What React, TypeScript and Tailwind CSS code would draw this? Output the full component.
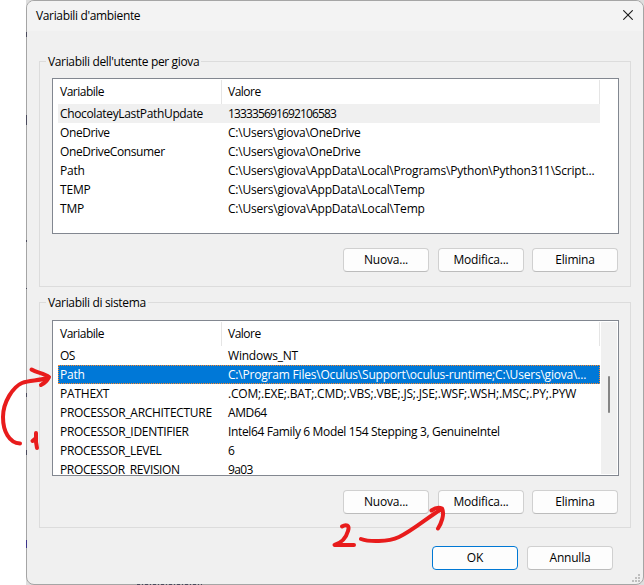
import type { ReactNode } from "react"
import clsx from "clsx"

type Variable = { name: string; value: string; nameClass?: string; valueClass?: string }

const userVariables: Variable[] = [
  {
    name: "ChocolateyLastPathUpdate",
    value: "133335691692106583",
    nameClass: "tracking-[-0.35px]",
    valueClass: "tracking-[-0.86px]",
  },
  { name: "OneDrive", value: "C:\\Users\\giova\\OneDrive", nameClass: "tracking-[-0.4px]", valueClass: "tracking-[-0.24px]" },
  { name: "OneDriveConsumer", value: "C:\\Users\\giova\\OneDrive", nameClass: "tracking-[-0.38px]", valueClass: "tracking-[-0.24px]" },
  {
    name: "Path",
    value: "C:\\Users\\giova\\AppData\\Local\\Programs\\Python\\Python311\\Script...",
    valueClass: "tracking-[-0.21px]",
  },
  { name: "TEMP", value: "C:\\Users\\giova\\AppData\\Local\\Temp" },
  { name: "TMP", value: "C:\\Users\\giova\\AppData\\Local\\Temp" },
]

const systemVariables: Variable[] = [
  { name: "OS", value: "Windows_NT", nameClass: "tracking-[-0.5px]" },
  { name: "Path", value: "C:\\Program Files\\Oculus\\Support\\oculus-runtime;C:\\Users\\giova\\..." },
  {
    name: "PATHEXT",
    value: ".COM;.EXE;.BAT;.CMD;.VBS;.VBE;.JS;.JSE;.WSF;.WSH;.MSC;.PY;.PYW",
    valueClass: "tracking-[-0.18px]",
  },
  { name: "PROCESSOR_ARCHITECTURE", value: "AMD64", nameClass: "tracking-[-0.3px]", valueClass: "tracking-[-0.4px]" },
  {
    name: "PROCESSOR_IDENTIFIER",
    value: "Intel64 Family 6 Model 154 Stepping 3, GenuineIntel",
    nameClass: "tracking-[-0.3px]",
    valueClass: "tracking-[-0.36px]",
  },
  { name: "PROCESSOR_LEVEL", value: "6", nameClass: "tracking-[-0.33px]" },
  { name: "PROCESSOR_REVISION", value: "9a03", nameClass: "tracking-[-0.36px]", valueClass: "tracking-[-0.6px]" },
]

function Button({ label, primary }: { label: string; primary?: boolean }) {
  return (
    <button
      className={clsx(
        "h-6 w-[86px] shrink-0 rounded-[4px] border bg-[#fdfdfd] text-center leading-[22px]",
        primary ? "border-[#0078d4]" : "border-[#d0d0d0] border-b-[#bcbcbc]"
      )}
    >
      {label}
    </button>
  )
}

function VariableList({
  variables,
  selected,
  active,
  scrollbar,
}: {
  variables: Variable[]
  selected: number
  active?: boolean
  scrollbar?: boolean
}) {
  return (
    <div className="flex h-[156px] w-[567px] overflow-hidden border border-[#828790] bg-white pt-px pl-[5px]">
      <div className="w-[542px] shrink-0">
        <div className="flex h-6 leading-6 tracking-[-0.5px]">
          <div className="w-[164px] border-r border-[#e5e5e5] pl-0.5">Variabile</div>
          <div className="flex-1 border-r border-[#e5e5e5] pl-1.5">Valore</div>
        </div>
        {variables.map((variable, i) => (
          <div
            key={i}
            className={clsx(
              "flex h-[19px] leading-[19px] whitespace-nowrap",
              i === selected && !active && "bg-[#f0f0f0]",
              i === selected && active && "bg-[#0078d7] text-white outline-1 -outline-offset-1 outline-dotted outline-[#ff8728]"
            )}
          >
            <div className="w-[170px] pl-0.5">
              <span className={variable.nameClass}>{variable.name}</span>
            </div>
            <div>
              <span className={variable.valueClass}>{variable.value}</span>
            </div>
          </div>
        ))}
      </div>
      {scrollbar && (
        <div className="ml-px h-[152px] w-4 bg-[#f0f0f0] pt-[54px] pl-[7px]">
          <div className="h-[37px] w-0.5 rounded-full bg-[#858585]" />
        </div>
      )}
    </div>
  )
}

function Group({ title, children }: { title: string; children: ReactNode }) {
  return (
    <section className="ml-3 h-[226px] w-[592px] border border-[#dcdcdc] pl-3">
      <div className="-mt-2 -ml-1.5 h-4 w-fit bg-[#f0f0f0] px-0.5 leading-4 tracking-[-0.35px]">{title}</div>
      {children}
      <div className="mt-3.5 flex pl-[291px]">
        <Button label="Nuova..." />
        <div className="ml-[9px] flex gap-2">
          <Button label="Modifica..." />
          <Button label="Elimina" />
        </div>
      </div>
    </section>
  )
}

export default function App() {
  return (
    <div className="relative h-[585px] w-[644px] overflow-hidden bg-white pl-[26px] font-['Open_Sans',sans-serif] text-[12px] tracking-[-0.2px] text-black">
      <div className="h-[585px] w-[618px] bg-[#dedede]">
        <div className="h-[585px] w-[618px] overflow-hidden rounded-[8px] border border-[#a5a5a5] bg-[#f0f0f0]">
          <header className="flex h-[30px] justify-between bg-[#f3f3f3] pr-[10px] pl-[9px]">
            <h1 className="leading-[30px] tracking-[-0.35px]">Variabili d'ambiente</h1>
            <svg className="mt-[9px]" width="10" height="10" viewBox="0 0 10 10" stroke="#1a1a1a" strokeWidth="1.1">
              <path d="M.3 .3 9.7 9.7M9.7 .3 .3 9.7" />
            </svg>
          </header>
          <main className="flex flex-col gap-[15px] pt-[30px]">
            <Group title="Variabili dell'utente per giova">
              <div className="mt-2">
                <VariableList variables={userVariables} selected={0} />
              </div>
            </Group>
            <Group title="Variabili di sistema">
              <div className="mt-[9px]">
                <VariableList variables={systemVariables} selected={1} active scrollbar />
              </div>
            </Group>
          </main>
          <footer className="mt-[18px] flex pl-[405px]">
            <Button label="OK" primary />
            <div className="ml-[9px]">
              <Button label="Annulla" />
            </div>
            <svg className="mt-7 ml-[19px]" width="8" height="8" fill="#bfbfbf">
              <path d="M6 0h2v2H6zM3 3h2v2H3zM6 3h2v2H6zM0 6h2v2H0zM3 6h2v2H3zM6 6h2v2H6z" />
            </svg>
          </footer>
        </div>
      </div>
      {/* bits of the window behind showing along the edge */}
      <svg className="absolute inset-0" width="644" height="585" stroke="#4a4a5c">
        <path d="M26.5 32v5M26.5 115v10M26.5 240v2M26.5 288v1M26.5 393v4M26.5 450v5" />
        <path d="M26.5 540v8" stroke="#3b3489" />
        <path d="M137 584.5H202" strokeDasharray="3 2 1 2" />
      </svg>
      {/* hand-drawn steps */}
      <svg
        className="absolute inset-0"
        width="644"
        height="585"
        fill="none"
        stroke="#e81c1c"
        strokeWidth="4"
        strokeLinecap="round"
        strokeLinejoin="round"
      >
        <path d="M20 443.5C9 443 3 431 3 417C3 402 13 387 22 383C30 380 38 381 47 378" />
        <path d="M31.5 369.5C37 373 44 373 49 377C47 381 45 383 41 385" />
        <path d="M32.5 441 36 438M36 433V442L37 448" />
        <path d="M342 526.5C346 524 350 525 348 531C346 538 341 543 334.5 545H354" />
        <path d="M361 539C369 542 388 542 399 537C412 531 427 518 440 510" />
        <path d="M431.5 510.5C435 508 439 507 442 508.500C445 514 441 524 438 528.500" />
      </svg>
    </div>
  )
}
